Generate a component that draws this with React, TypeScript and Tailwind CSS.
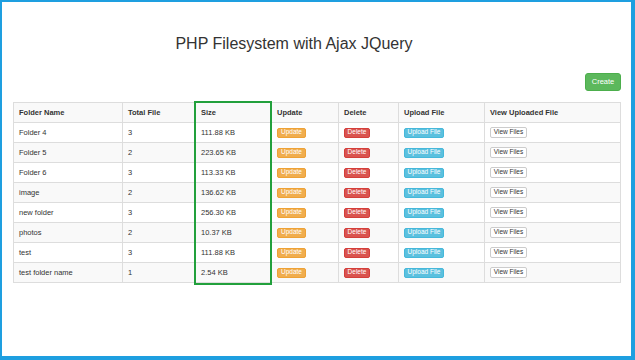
import React from "react";

const rows = [
  ["Folder 4", "3", "111.88 KB"],
  ["Folder 5", "2", "223.65 KB"],
  ["Folder 6", "3", "113.33 KB"],
  ["image", "2", "136.62 KB"],
  ["new folder", "3", "256.30 KB"],
  ["photos", "2", "10.37 KB"],
  ["test", "3", "111.88 KB"],
  ["test folder name", "1", "2.54 KB"],
];

const cols = "grid grid-cols-[109px_73px_76px_67px_60px_86px_137px]";
const cell = "flex items-center pl-[5px] border-r border-[#dddddd] last:border-r-0";

export default function App() {
  return (
    <div
      className="relative w-[635px] h-[360px] bg-white border-l-2 border-t-2 border-r-4 border-b-4 border-[#1e9fe0] text-[#333333]"
      style={{ fontFamily: '"Liberation Sans", Arial, sans-serif' }}
    >
      <div className="pt-[33px] pr-[45px] text-center">
        <h1 className="text-[16px] leading-[18px] font-normal text-[#333333]">
          PHP Filesystem with Ajax JQuery
        </h1>
      </div>

      <div className="mt-[20px] flex justify-end pr-[10px]">
        <button className="w-[36px] h-[18px] rounded-[3px] bg-[#5cb85c] border border-[#4cae4c] text-white text-[7.5px] leading-none flex items-center justify-center">
          Create
        </button>
      </div>

      <div className="mt-[11px] ml-[11px] w-[608px] border-t border-l border-r border-[#dddddd] text-[7.5px]">
        <div className={`${cols} h-[20px] border-b border-[#dddddd] bg-[#f9f9f9] font-bold`}>
          <div className={cell}>Folder Name</div>
          <div className={cell}>Total File</div>
          <div className={cell}>Size</div>
          <div className={cell}>Update</div>
          <div className={cell}>Delete</div>
          <div className={cell}>Upload File</div>
          <div className={cell}>View Uploaded File</div>
        </div>
        {rows.map((r, i) => (
          <div
            key={i}
            className={`${cols} h-[20px] border-b border-[#dddddd] ${i % 2 === 1 ? "bg-[#f9f9f9]" : "bg-white"}`}
          >
            <div className={cell}>{r[0]}</div>
            <div className={cell}>{r[1]}</div>
            <div className={cell}>{r[2]}</div>
            <div className={cell}>
              <span className="w-[29px] h-[10px] rounded-[2px] bg-[#f0ad4e] border border-[#eea236] text-white text-[6.5px] leading-none flex items-center justify-center">
                Update
              </span>
            </div>
            <div className={`${cell} pl-[4px]`}>
              <span className="w-[26px] h-[10px] rounded-[2px] bg-[#d9534f] border border-[#d43f3a] text-white text-[6.5px] leading-none flex items-center justify-center">
                Delete
              </span>
            </div>
            <div className={cell}>
              <span className="w-[40px] h-[10px] rounded-[2px] bg-[#5bc0de] border border-[#46b8da] text-white text-[6.5px] leading-none flex items-center justify-center">
                Upload File
              </span>
            </div>
            <div className={cell}>
              <span className="w-[37px] h-[11px] rounded-[2px] bg-white border border-[#cccccc] text-[#333333] text-[6.5px] leading-none flex items-center justify-center">
                View Files
              </span>
            </div>
          </div>
        ))}
      </div>

      <div className="absolute left-[192px] top-[99px] w-[78px] h-[184px] border-2 border-[#22a03c] pointer-events-none" />
    </div>
  );
}
